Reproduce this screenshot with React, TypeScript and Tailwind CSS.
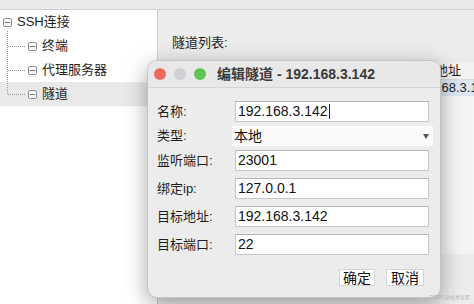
import React from "react";

const FONT = { fontFamily: '"Liberation Sans", "Noto Sans CJK SC", sans-serif' };

function Box() {
  return (
    <span className="flex h-[9px] w-[9px] shrink-0 items-center justify-center rounded-[2px] border border-[#8e8e8e] bg-white">
      <span className="h-px w-[5px] bg-[#6e6e6e]" />
    </span>
  );
}

function Child({ label, selected }: { label: string; selected?: boolean }) {
  return (
    <div className={`flex h-[24px] items-center ${selected ? "bg-[#e9e9e9]" : ""}`}>
      <span className="ml-[8px] w-[17px] border-t border-dotted border-[#9a9a9a]" />
      <span className="ml-[3px]"><Box /></span>
      <span className="ml-[5px] text-[13px] text-[#1e1e1e]">{label}</span>
    </div>
  );
}

function Field({ value, caret, className = "" }: { value: string; caret?: boolean; className?: string }) {
  return (
    <div className={`flex h-[21px] w-[194px] items-center border border-[#c6c6c6] border-t-[#b5b5b5] bg-white pl-[2px] text-[14px] text-[#111] ${className}`}>
      <span>{value}</span>
      {caret && <span className="ml-px h-[15px] w-px bg-[#222]" />}
    </div>
  );
}

function Row({ label, children, className = "" }: { label: string; children: React.ReactNode; className?: string }) {
  return (
    <div className={`flex items-center ${className}`}>
      <span className="w-[78px] text-[13px] text-[#1e1e1e]">{label}</span>
      {children}
    </div>
  );
}

export default function App() {
  return (
    <div className="relative h-[304px] w-[474px] overflow-hidden bg-[#ececec]" style={FONT}>
      <div className="h-[10px] border-b border-[#d2d2d2] bg-[#e9e9e9]" />
      <div className="flex h-[294px]">
        {/* tree */}
        <div className="w-[158px] shrink-0 border-r border-[#cdcdcd] bg-white">
          <div className="flex h-[24px] items-center">
            <span className="ml-[3px]"><Box /></span>
            <span className="ml-[5px] text-[13px] text-[#1e1e1e]">SSH连接</span>
          </div>
          <div className="relative">
            <span className="absolute left-[7px] top-[-3px] h-[63px] border-l border-dotted border-[#9a9a9a]" />
            <Child label="终端" />
            <Child label="代理服务器" />
            <Child label="隧道" selected />
          </div>
        </div>
        {/* right panel */}
        <div className="flex-1 overflow-hidden pl-[14px] pt-[23px]">
          <div className="text-[13px] leading-[20px] text-[#1e1e1e]">隧道列表:</div>
          <div className="mt-[10px] w-[400px] bg-[#f5f5f5]">
            <div className="flex h-[17px] items-center border-b border-[#dcdcdc] bg-[#f2f2f2] text-[13px] text-[#1e1e1e]">
              <span className="w-[236px] shrink-0 pl-[4px]">名称</span>
              <span className="pl-[1px]">目标地址</span>
            </div>
            <div className="flex h-[16px] items-center bg-[#dde7f3] text-[13px] text-[#1e1e1e]">
              <span className="w-[236px] shrink-0 pl-[4px]">隧道1</span>
              <span className="pl-[1px]">192.168.3.142</span>
            </div>
            <div className="h-[158px]" />
          </div>
        </div>
      </div>

      {/* dialog window */}
      <div className="absolute left-[147px] top-[60px] h-[238px] w-[294px] overflow-hidden rounded-[10px] border border-[#c4c4c4] bg-[#ececec] shadow-[0_6px_22px_rgba(0,0,0,0.35)]">
        <div className="flex h-[27px] items-center border-b border-[#d5d5d5] bg-[#e8e8e8] pl-[6px]">
          <span className="h-[12px] w-[12px] rounded-full bg-[#ee6a5f]" />
          <span className="ml-[8px] h-[12px] w-[12px] rounded-full bg-[#d0cfd3]" />
          <span className="ml-[8px] h-[12px] w-[12px] rounded-full bg-[#5fc454]" />
          <span className="ml-[11px] text-[14px] font-bold text-[#3a3a3a]">编辑隧道 - 192.168.3.142</span>
        </div>
        <div className="pl-[9px] pt-[13px]">
          <Row label="名称:">
            <Field value="192.168.3.142" caret />
          </Row>
          <Row label="类型:" className="mt-[4px]">
            <div className="-ml-[3px] flex h-[20px] w-[201px] items-center justify-between bg-[#fafafa] pl-[2px] pr-[4px] text-[14px] text-[#111]">
              <span>本地</span>
              <span className="h-0 w-0 border-l-[3.5px] border-r-[3.5px] border-t-[5px] border-l-transparent border-r-transparent border-t-[#555]" />
            </div>
          </Row>
          <Row label="监听端口:" className="mt-[4px]">
            <Field value="23001" />
          </Row>
          <Row label="绑定ip:" className="mt-[7px]">
            <Field value="127.0.0.1" />
          </Row>
          <Row label="目标地址:" className="mt-[7px]">
            <Field value="192.168.3.142" />
          </Row>
          <Row label="目标端口:" className="mt-[7px]">
            <Field value="22" />
          </Row>
          <div className="mt-[14px] flex justify-end gap-[11px] pr-[16px]">
            <button className="flex h-[17px] items-center border border-[#d4d4d4] bg-white px-[3px] text-[14px] leading-none text-[#111]">确定</button>
            <button className="flex h-[17px] items-center border border-[#d4d4d4] bg-white px-[4px] text-[14px] leading-none text-[#111]">取消</button>
          </div>
        </div>
      </div>
      <div className="absolute bottom-[3px] right-[4px] text-[5px] text-[#b0b0b0]">CSDN @技术社区</div>
    </div>
  );
}
